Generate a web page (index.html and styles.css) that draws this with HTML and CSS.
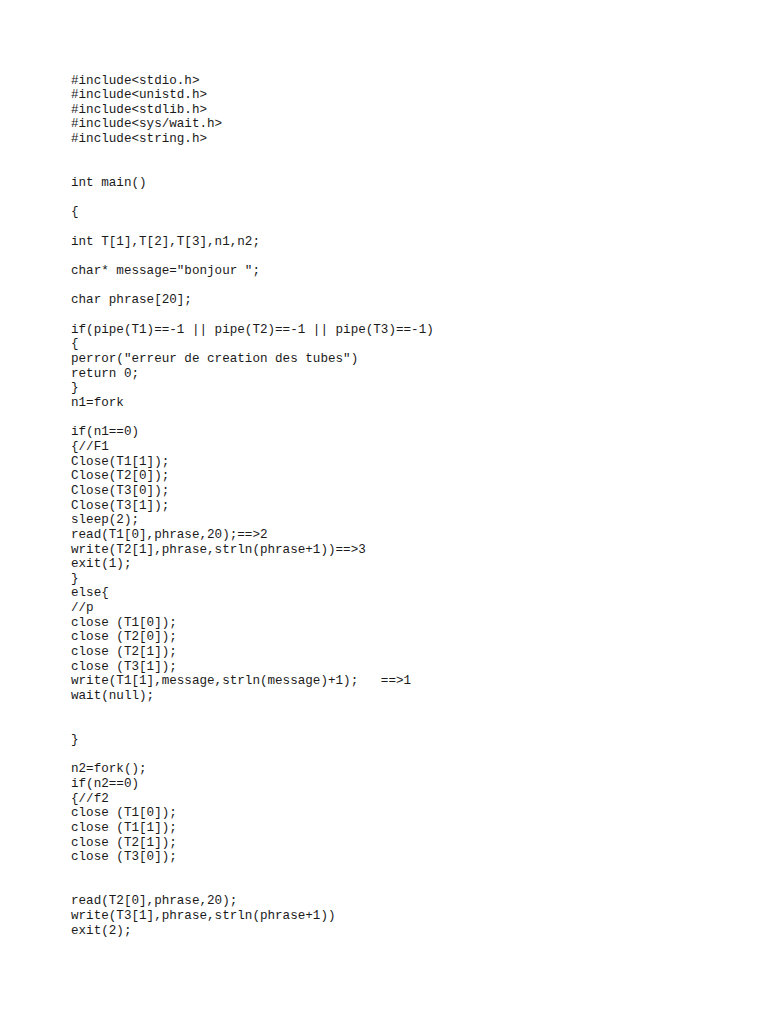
FILE: index.html
```
<!DOCTYPE html>
<html>
<head>
<meta charset="utf-8">
<link rel="stylesheet" href="styles.css">
</head>
<body>
<main class="page">
<pre class="code">#include&lt;stdio.h&gt;
#include&lt;unistd.h&gt;
#include&lt;stdlib.h&gt;
#include&lt;sys/wait.h&gt;
#include&lt;string.h&gt;


int main()

{

int T[1],T[2],T[3],n1,n2;

char* message="bonjour ";

char phrase[20];

if(pipe(T1)==-1 || pipe(T2)==-1 || pipe(T3)==-1)
{
perror("erreur de creation des tubes")
return 0;
}
n1=fork

if(n1==0)
{//F1
Close(T1[1]);
Close(T2[0]);
Close(T3[0]);
Close(T3[1]);
sleep(2);
read(T1[0],phrase,20);==&gt;2
write(T2[1],phrase,strln(phrase+1))==&gt;3
exit(1);
}
else{
//p
close (T1[0]);
close (T2[0]);
close (T2[1]);
close (T3[1]);
write(T1[1],message,strln(message)+1);   ==&gt;1
wait(null);


}

n2=fork();
if(n2==0)
{//f2
close (T1[0]);
close (T1[1]);
close (T2[1]);
close (T3[0]);


read(T2[0],phrase,20);
write(T3[1],phrase,strln(phrase+1))
exit(2);</pre>
</main>
</body>
</html>
```
FILE: styles.css
```
html, body {
  margin: 0;
  padding: 0;
  background: #ffffff;
}
.page {
  width: 768px;
  height: 1024px;
  overflow: hidden;
  padding: 73.5px 0 0 71px;
  box-sizing: border-box;
}
.code {
  margin: 0;
  font-family: "Liberation Mono", monospace;
  font-size: 12.6px;
  line-height: 14.66px;
  color: #1a1a1a;
  white-space: pre;
}
```
